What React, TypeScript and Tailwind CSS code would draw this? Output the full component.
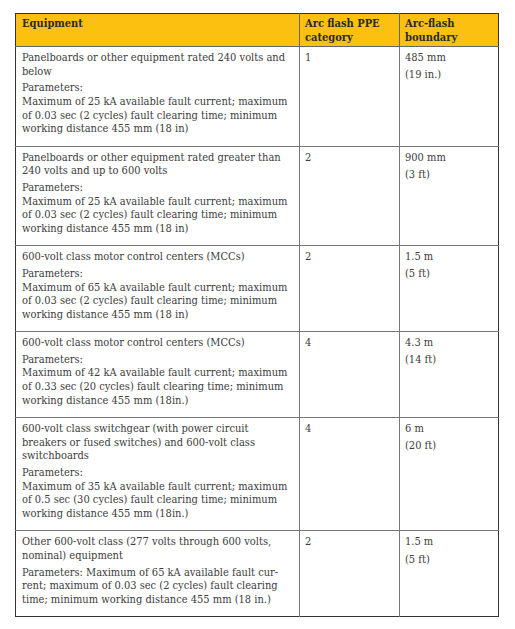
import React from "react";

type Row = { eq: string[]; params: string; cat: string; b1: string; b2: string };

const rows: Row[] = [
  {
    eq: ["Panelboards or other equipment rated 240 volts and", "below"],
    params:
      "Maximum of 25 kA available fault current; maximum|of 0.03 sec (2 cycles) fault clearing time; minimum|working distance 455 mm (18 in)",
    cat: "1",
    b1: "485 mm",
    b2: "(19 in.)",
  },
  {
    eq: ["Panelboards or other equipment rated greater than", "240 volts and up to 600 volts"],
    params:
      "Maximum of 25 kA available fault current; maximum|of 0.03 sec (2 cycles) fault clearing time; minimum|working distance 455 mm (18 in)",
    cat: "2",
    b1: "900 mm",
    b2: "(3 ft)",
  },
  {
    eq: ["600-volt class motor control centers (MCCs)"],
    params:
      "Maximum of 65 kA available fault current; maximum|of 0.03 sec (2 cycles) fault clearing time; minimum|working distance 455 mm (18 in)",
    cat: "2",
    b1: "1.5 m",
    b2: "(5 ft)",
  },
  {
    eq: ["600-volt class motor control centers (MCCs)"],
    params:
      "Maximum of 42 kA available fault current; maximum|of 0.33 sec (20 cycles) fault clearing time; minimum|working distance 455 mm (18in.)",
    cat: "4",
    b1: "4.3 m",
    b2: "(14 ft)",
  },
  {
    eq: [
      "600-volt class switchgear (with power circuit",
      "breakers or fused switches) and 600-volt class",
      "switchboards",
    ],
    params:
      "Maximum of 35 kA available fault current; maximum|of 0.5 sec (30 cycles) fault clearing time; minimum|working distance 455 mm (18in.)",
    cat: "4",
    b1: "6 m",
    b2: "(20 ft)",
  },
];

const font = { fontFamily: '"DejaVu Serif Condensed", "DejaVu Serif", serif' };

function Lines({ text }: { text: string[] }) {
  return (
    <>
      {text.map((t, i) => (
        <div key={i} className="whitespace-nowrap">
          {t}
        </div>
      ))}
    </>
  );
}

export default function App() {
  return (
    <div className="w-[515px] h-[629px] bg-white pt-[13px] pl-[15px]" style={font}>
      <table className="border-collapse table-fixed border border-[#333] text-[11px] leading-[13.6px] text-[#3c3c3c]">
        <colgroup>
          <col className="w-[284px]" />
          <col className="w-[100px]" />
          <col className="w-[99px]" />
        </colgroup>
        <thead>
          <tr className="bg-[#fcc010] text-[#2a2a2a] font-bold align-top">
            <th className="text-left font-bold px-[6px] pt-[3px] pb-[2px] h-[31px] border-r border-b border-[#666]">
              Equipment
            </th>
            <th className="text-left font-bold pl-[5px] pt-[3px] pb-[2px] border-r border-b border-[#666]">
              <div>Arc flash PPE</div>
              <div>category</div>
            </th>
            <th className="text-left font-bold pl-[5px] pt-[3px] pb-[2px] border-b border-[#666]">
              <div>Arc-flash</div>
              <div>boundary</div>
            </th>
          </tr>
        </thead>
        <tbody>
          {rows.map((r, i) => (
            <tr key={i} className="align-top">
              <td className="px-[6px] pt-[4px] pb-[10px] border-r border-b border-[#777]">
                <Lines text={r.eq} />
                <div className="mt-[3px]">Parameters:</div>
                <Lines text={r.params.split("|")} />
              </td>
              <td className="pl-[5px] pt-[4px] border-r border-b border-[#777]">{r.cat}</td>
              <td className="pl-[5px] pt-[4px] border-b border-[#777]">
                <div>{r.b1}</div>
                <div className="mt-[3.5px]">{r.b2}</div>
              </td>
            </tr>
          ))}
          <tr className="align-top">
            <td className="px-[6px] pt-[4px] pb-[10px] border-r border-[#777]">
              <Lines text={["Other 600-volt class (277 volts through 600 volts,", "nominal) equipment"]} />
              <div className="mt-[3px]">
                <Lines
                  text={[
                    "Parameters: Maximum of 65 kA available fault cur-",
                    "rent; maximum of 0.03 sec (2 cycles) fault clearing",
                    "time; minimum working distance 455 mm (18 in.)",
                  ]}
                />
              </div>
            </td>
            <td className="pl-[5px] pt-[4px] border-r border-[#777]">2</td>
            <td className="pl-[5px] pt-[4px]">
              <div>1.5 m</div>
              <div className="mt-[3.5px]">(5 ft)</div>
            </td>
          </tr>
        </tbody>
      </table>
    </div>
  );
}
